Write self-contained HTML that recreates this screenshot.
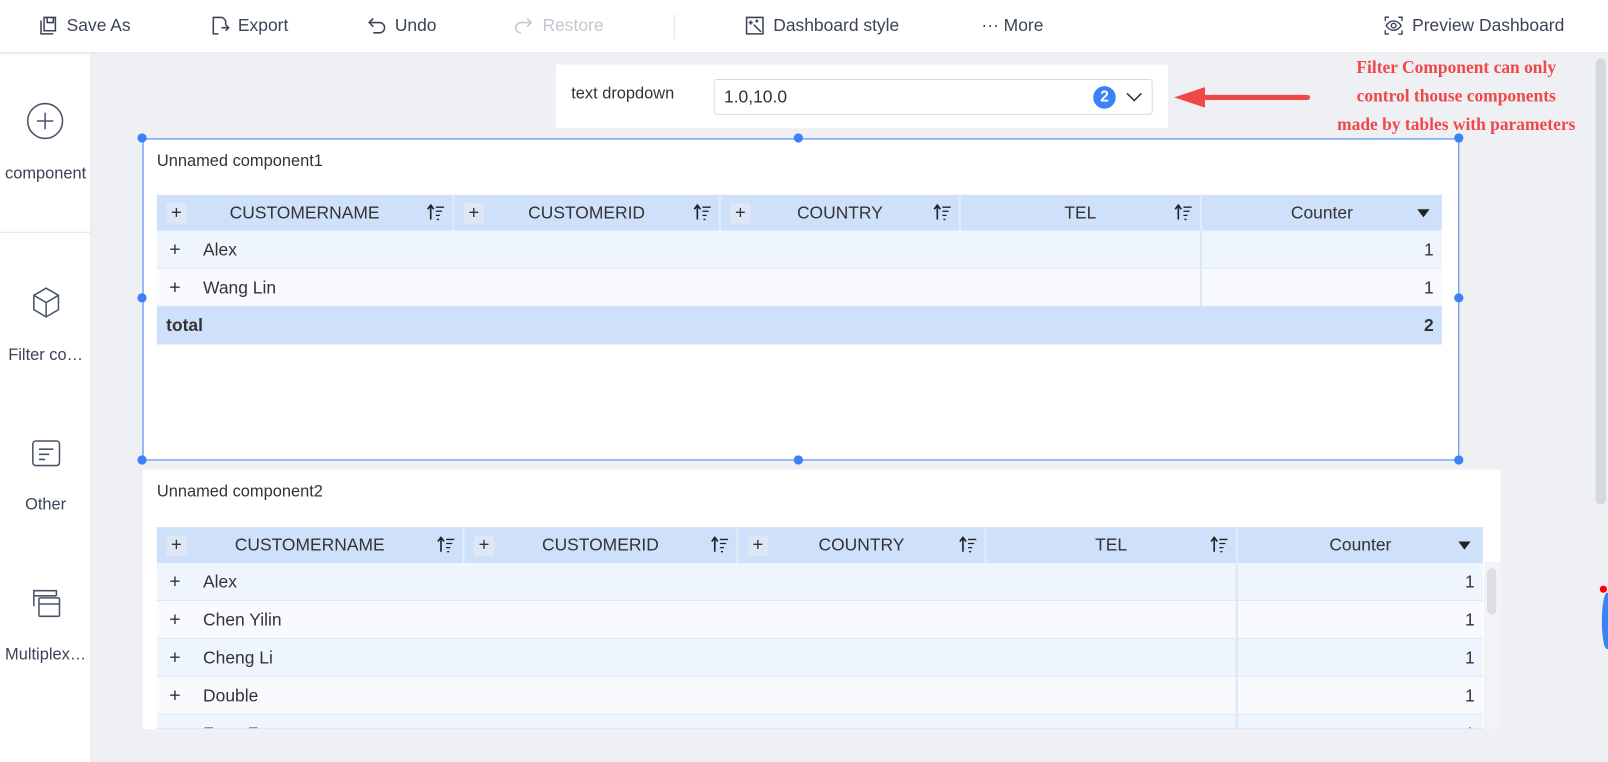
<!DOCTYPE html>
<html><head><meta charset="utf-8"><style>
*{box-sizing:border-box;margin:0;padding:0}
html,body{width:1608px;height:743px;overflow:hidden;background:#eff0f4}
#root{position:absolute;left:0;top:0;width:1568px;height:725px;transform:scale(1.02551);transform-origin:0 0;font-family:"Liberation Sans",Arial,sans-serif;color:#333}
.a{position:absolute}
.tb{left:0;top:0;width:1568px;height:52px;background:#fff;border-bottom:1px solid #e3e5ea}
.ti{position:absolute;top:14px;font-size:17px;color:#3b4356;display:flex;align-items:center;gap:8px;height:22px}
.ti svg{width:20px;height:20px;fill:none;stroke:#3b4356;stroke-width:1.5}
.side{left:0;top:53px;width:89px;height:690px;background:#fff;border-right:1px solid #e3e5ea}
.sl{position:absolute;left:0;width:89px;text-align:center;font-size:16px;color:#3b4356;white-space:nowrap}
.side svg{position:absolute;fill:none;stroke:#4a5468;stroke-width:1.5}
.cell{position:absolute;font-size:17px;display:flex;align-items:center}
.h{background:#cfe0fa}
.plus{position:absolute;width:20px;height:20px;background:#dde7f5;font-size:18px;line-height:19px;text-align:center;color:#333}
.dot{position:absolute;width:9px;height:9px;border-radius:50%;background:#3b82f6}
</style></head><body><div id="root">
<div class="a tb">
 <div class="ti" style="left:37px"><svg viewBox="0 0 20 20"><path d="M6 2h11v13H6z M9 2v5h6V2 M3 5v13h12"/></svg>Save As</div>
 <div class="ti" style="left:204px"><svg viewBox="0 0 20 20"><path d="M13 2H4v16h5 M13 2l3 3v4 M12 12h7 M16 9l3 3-3 3"/></svg>Export</div>
 <div class="ti" style="left:357px"><svg viewBox="0 0 20 20"><path d="M4 7h9a5 5 0 010 10H7 M7 3L3 7l4 4"/></svg>Undo</div>
 <div class="ti" style="left:501px;color:#c3c7cf"><svg viewBox="0 0 20 20" style="stroke:#c3c7cf"><path d="M16 7H7a5 5 0 000 10 M13 3l4 4-4 4"/></svg>Restore</div>
 <div class="a" style="left:657px;top:14px;width:1px;height:24px;background:#e3e5ea"></div>
 <div class="ti" style="left:726px"><svg viewBox="0 0 20 20"><path d="M2 2h16v16H2z M9 9l7 7 M6 5v4M4 7h4 M12 4v3M10.5 5.5h3"/></svg>Dashboard style</div>
 <div class="ti" style="left:957px">···&nbsp;More</div>
 <div class="ti" style="left:1349px"><svg viewBox="0 0 22 22"><path d="M2 6V2h4 M16 2h4v4 M20 16v4h-4 M6 20H2v-4 M3 11s3-5 8-5 8 5 8 5-3 5-8 5-8-5-8-5z"/><circle cx="11" cy="11" r="2.5"/></svg>Preview Dashboard</div>
</div>
<div class="a side">
 <svg style="left:25px;top:46px" width="38" height="38" viewBox="0 0 38 38"><circle cx="19" cy="19" r="17"/><path d="M19 11v16M11 19h16"/></svg>
 <div class="sl" style="top:108px">component</div>
 <div class="a" style="left:0;top:173px;width:89px;height:1px;background:#e3e5ea"></div>
 <svg style="left:30px;top:226px" width="30" height="32" viewBox="0 0 30 32"><path d="M15 2l12 7v14l-12 7-12-7V9z M3 9l12 7 12-7 M15 16v14"/></svg>
 <div class="sl" style="top:285px">Filter co…</div>
 <svg style="left:30px;top:375px" width="30" height="30" viewBox="0 0 30 30"><rect x="2" y="2" width="26" height="24" rx="3"/><path d="M8 10h14M8 15h10M8 20h6"/></svg>
 <div class="sl" style="top:431px">Other</div>
 <svg style="left:30px;top:520px" width="30" height="32" viewBox="0 0 30 32"><path d="M3 18V3h22v5 M3 8h22"/><rect x="8" y="10" width="20" height="18" rx="1"/><path d="M8 16h20"/></svg>
 <div class="sl" style="top:577px">Multiplex…</div>
</div>
<div class="a" style="left:542px;top:63px;width:597px;height:62px;background:#fff"></div>
<div class="a" style="left:557px;top:83px;font-size:16px">text dropdown</div>
<div class="a" style="left:696px;top:77px;width:428px;height:35px;border:1px solid #d6d9df;border-radius:3px;background:#fff"></div>
<div class="a" style="left:706px;top:85px;font-size:17px">1.0,10.0</div>
<div class="a" style="left:1066px;top:84px;width:22px;height:22px;border-radius:50%;background:#3b82f6;color:#fff;font-size:15px;font-weight:bold;text-align:center;line-height:22px">2</div>
<svg class="a" style="left:1097px;top:87px" width="18" height="14" viewBox="0 0 18 14"><path d="M2 4l7 7 7-7" fill="none" stroke="#333" stroke-width="1.5"/></svg>
<svg class="a" style="left:1140px;top:80px" width="145" height="30" viewBox="0 0 145 30"><path d="M30 15H135" stroke="#f04848" stroke-width="5" stroke-linecap="round"/><path d="M5 15L35 5v20z" fill="#f04848"/></svg>
<div class="a" style="left:1290px;top:52px;width:260px;text-align:center;font-family:'Liberation Serif',serif;font-size:17px;line-height:28px;color:#f04848;font-weight:bold">Filter Component can only<br>control thouse components<br>made by tables with parameters</div>
<div class="a" style="left:1553px;top:53px;width:15px;height:690px;background:#eff0f4"></div>
<div class="a" style="left:1556px;top:57px;width:10px;height:435px;border-radius:5px;background:#d5d8de"></div>
<div class="a" style="left:1560px;top:571px;width:7px;height:7px;border-radius:50%;background:#f00"></div>
<div class="a" style="left:1562px;top:578px;width:10px;height:55px;border-radius:50% 0 0 50%;background:#3b82f6"></div>
<div class="a" style="left:139px;top:135px;width:1284px;height:314px;background:#fff;border:1px solid #3b82f6"></div>
<div class="dot" style="left:134px;top:130px"></div><div class="dot" style="left:774px;top:130px"></div><div class="dot" style="left:1418px;top:130px"></div>
<div class="dot" style="left:134px;top:286px"></div><div class="dot" style="left:1418px;top:286px"></div>
<div class="dot" style="left:134px;top:444px"></div><div class="dot" style="left:774px;top:444px"></div><div class="dot" style="left:1418px;top:444px"></div>
<div class="a" style="left:153px;top:149px;font-size:16px">Unnamed component1</div>
<div id="t1"></div>
<div class="a" style="left:139px;top:458px;width:1324px;height:253px;background:#fff"></div>
<div class="a" style="left:153px;top:471px;font-size:16px">Unnamed component2</div>
<div id="t2"></div>
<div class="a" style="left:1447px;top:548px;width:16px;height:163px;background:#f2f3f5"></div>
<div class="a" style="left:1450px;top:554px;width:9px;height:45px;border-radius:5px;background:#dcdee2"></div>
</div>
<script>
function tbl(id,x,top,cols,rows,total,clip){
 var h='';var hh=35,rh=37;
 var names=['CUSTOMERNAME','CUSTOMERID','COUNTRY','TEL','Counter'];
 var W=cols[cols.length-1][1]-x;
 h+='<div class="a h" style="left:'+x+'px;top:'+top+'px;width:'+W+'px;height:'+hh+'px"></div>';
 cols.forEach(function(c,i){
  var l=c[0],r=c[1],w=r-l;
  if(i>0)h+='<div class="a" style="left:'+(l-2)+'px;top:'+top+'px;width:2px;height:'+hh+'px;background:#e2ecfb"></div>';
  if(i<3)h+='<div class="plus" style="left:'+(l+9)+'px;top:'+(top+8)+'px">+</div>';
  h+='<div class="cell" style="left:'+l+'px;top:'+top+'px;width:'+w+'px;height:'+hh+'px;justify-content:center">'+names[i]+'</div>';
  if(i<4)h+='<svg class="a" style="left:'+(r-25)+'px;top:'+(top+9)+'px" width="18" height="16" viewBox="0 0 18 16"><path d="M4 15V2M1 5l3-4 3 4" fill="none" stroke="#222" stroke-width="1.6"/><path d="M9 3h8M9 7h6M9 11h4M10 15h2" stroke="#222" stroke-width="1.3"/></svg>';
  else h+='<svg class="a" style="left:'+(r-25)+'px;top:'+(top+13)+'px" width="14" height="10"><path d="M1 1h12L7 9z" fill="#222"/></svg>';
 });
 var y=top+hh;var cl=cols[4][0];
 rows.forEach(function(n,i){
  var bg=i%2?'#f8fafe':'#eff5fd';var H=rh;
  if(clip&&y+H>clip)H=clip-y;
  h+='<div class="a" style="left:'+x+'px;top:'+y+'px;width:'+W+'px;height:'+H+'px;background:'+bg+';border-bottom:1px solid #dbe6f6;overflow:hidden">'+
  '<div class="a" style="left:'+(cl-x-2)+'px;top:0;width:2px;height:'+rh+'px;background:#dbe6f6"></div>'+
  '<div class="a" style="left:12px;top:8px;font-size:19px">+</div><div class="a" style="left:45px;top:9px;font-size:17px">'+n+'</div>'+
  '<div class="a" style="right:8px;top:9px;font-size:17px">1</div></div>';
  y+=rh;
 });
 if(total){h+='<div class="a h" style="left:'+x+'px;top:'+y+'px;width:'+W+'px;height:37px;font-weight:bold;font-size:17px"><div class="a" style="left:9px;top:9px">total</div><div class="a" style="right:8px;top:9px">2</div></div>';}
 document.getElementById(id).innerHTML=h;
}
tbl('t1',153,190,[[153,441],[443,701],[703,935],[937,1170],[1172,1406]],['Alex','Wang Lin'],true);
tbl('t2',153,514,[[153,451],[453,718],[720,960],[962,1205],[1207,1446]],['Alex','Chen Yilin','Cheng Li','Double','Feng Feng'],false,711);
</script>
</body></html>
